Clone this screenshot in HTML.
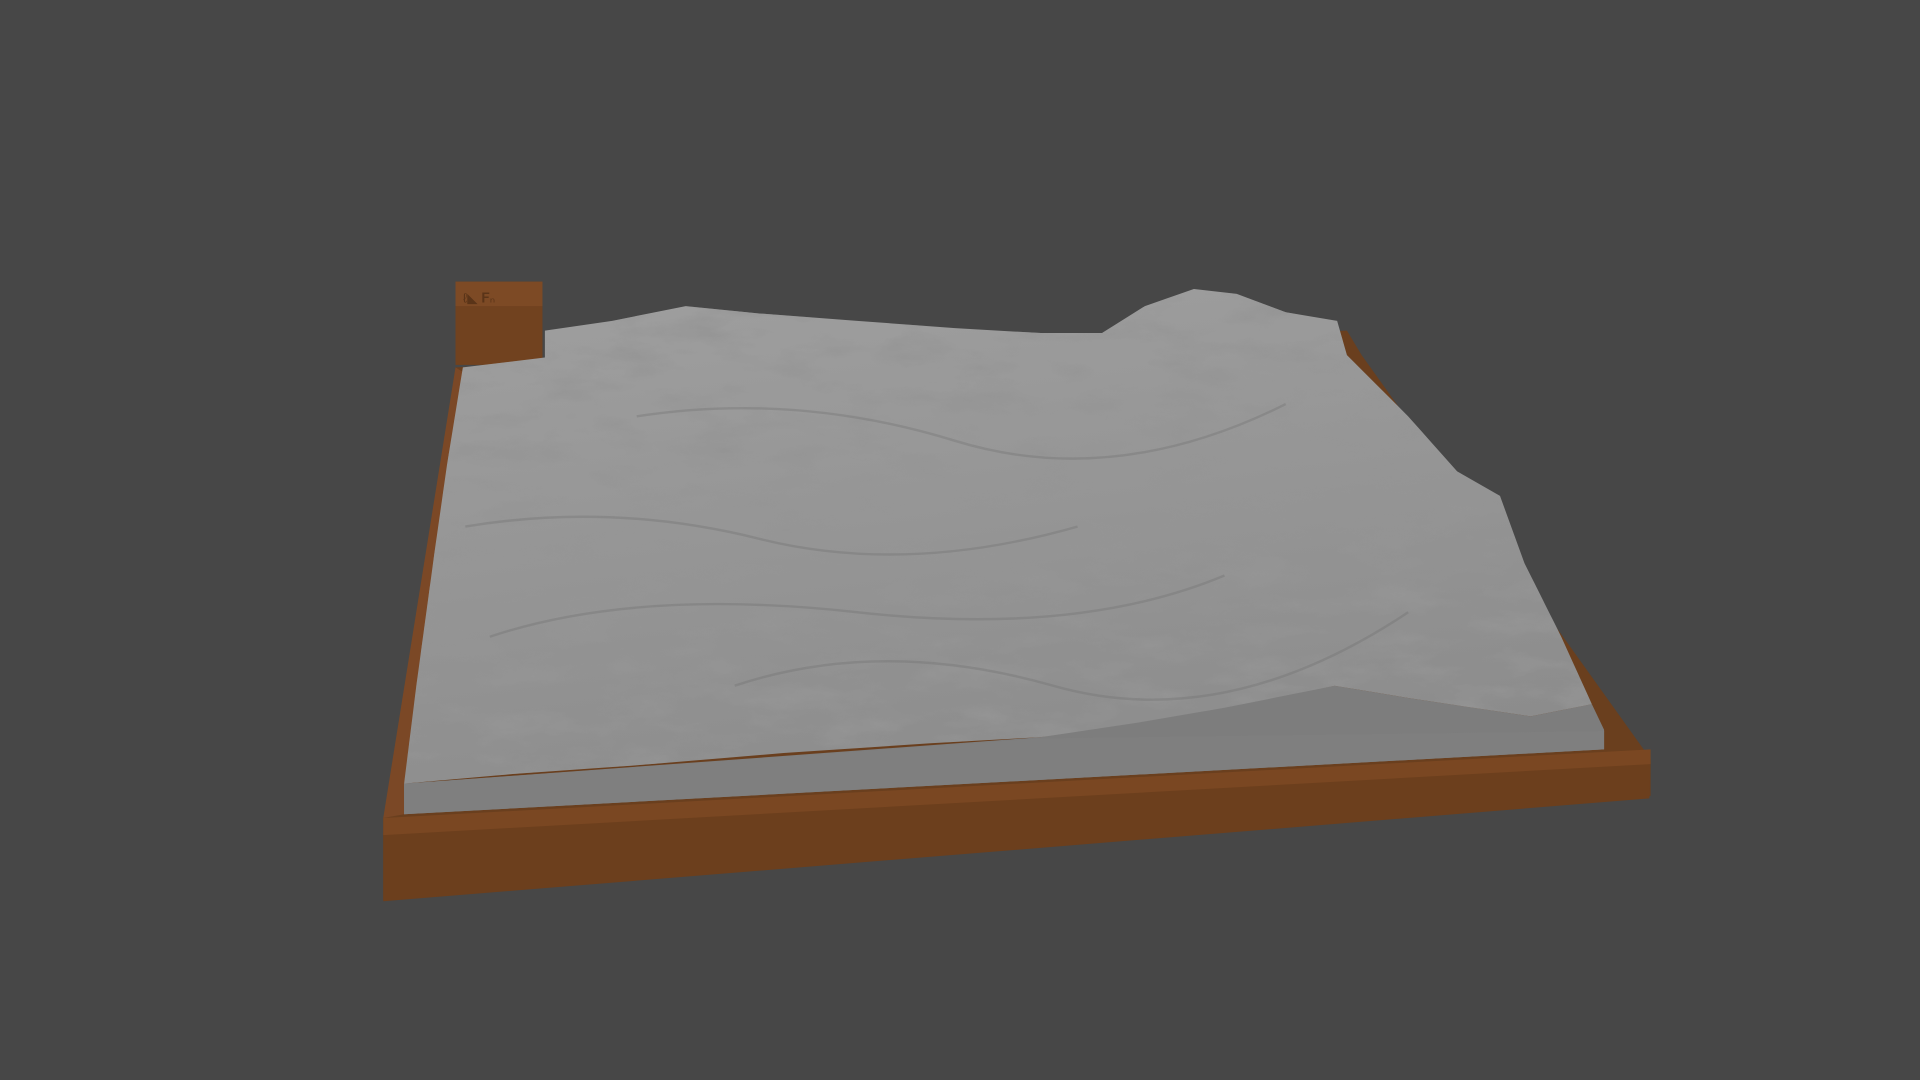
<!DOCTYPE html>
<html><head><style>
html,body{margin:0;padding:0;background:#474747;overflow:hidden}
svg{display:block}
</style></head><body>
<svg width="1920" height="1080" viewBox="0 0 1568 882" preserveAspectRatio="none" xmlns="http://www.w3.org/2000/svg">
<defs>
<linearGradient id="t" x1="0" y1="0" x2="0.3" y2="1">
<stop offset="0" stop-color="#a0a0a0"/><stop offset="0.5" stop-color="#969696"/><stop offset="1" stop-color="#8c8c8c"/>
</linearGradient>
<filter id="n" x="0" y="0" width="1" height="1">
<feTurbulence type="fractalNoise" baseFrequency="0.018 0.05" numOctaves="5" seed="11"/>
<feColorMatrix values="0 0 0 0 0.3  0 0 0 0 0.3  0 0 0 0 0.3  0 0 0 -2.4 1.3"/>
<feComposite in2="SourceGraphic" operator="in"/>
</filter>
<clipPath id="cp"><path d="M378,300 L445,292 L445,270 L500,262 L560,250 L620,256 L700,262 L780,268 L850,272 L900,272 L935,250 L975,236 L1010,240 L1050,255 L1092,262 L1100,290 L1150,340 L1190,385 L1225,405 L1245,460 L1275,520 L1300,575 L1250,585 L1150,570 L1090,560 L1000,578 L930,590 L850,602 L760,607 L640,615 L520,625 L420,632 L330,640 L340,560 L355,450 L365,380 Z"/></clipPath>
</defs>
<rect width="1568" height="882" fill="#474747"/>
<polygon points="372,300 1100,270 1112,290 1348,620 1348,650 313,735 313,668 330,630" fill="#6a3f1e"/>
<polygon points="313,680 1348,622 1347,652 313,736" fill="#6c3f1d"/>
<polygon points="313,668 1348,612 1348,624 313,682" fill="#7a4722"/>
<polygon points="372,300 380,305 330,665 313,668" fill="#7b4826"/>
<rect x="372" y="230" width="71" height="68" fill="#71421f"/>
<rect x="372" y="230" width="71" height="20" fill="#7d4a25"/>
<text x="378" y="247" font-family="Liberation Sans, sans-serif" font-size="11" fill="#5a3418">ℓ◣ 𝐅ₙ</text>
<polygon points="330,665 1310,612 1310,596 1300,575 1250,585 1150,570 1090,560 850,602 330,640" fill="#7d7d7d"/>
<polygon points="330,640 850,603 1310,597 1310,612 330,665" fill="#7f7f7f"/>
<g clip-path="url(#cp)">
<rect x="300" y="220" width="1050" height="450" fill="url(#t)"/>
<rect x="300" y="220" width="1050" height="450" fill="#999" filter="url(#n)"/>
<g stroke="#707070" stroke-width="2" fill="none" opacity="0.35">
<path d="M380,430 Q500,410 620,440 T880,430"/>
<path d="M400,520 Q520,480 700,500 T1000,470"/>
<path d="M600,560 Q720,520 860,560 T1150,500"/>
<path d="M520,340 Q650,320 780,360 T1050,330"/>
</g>
</g>
</svg>
</body></html>
